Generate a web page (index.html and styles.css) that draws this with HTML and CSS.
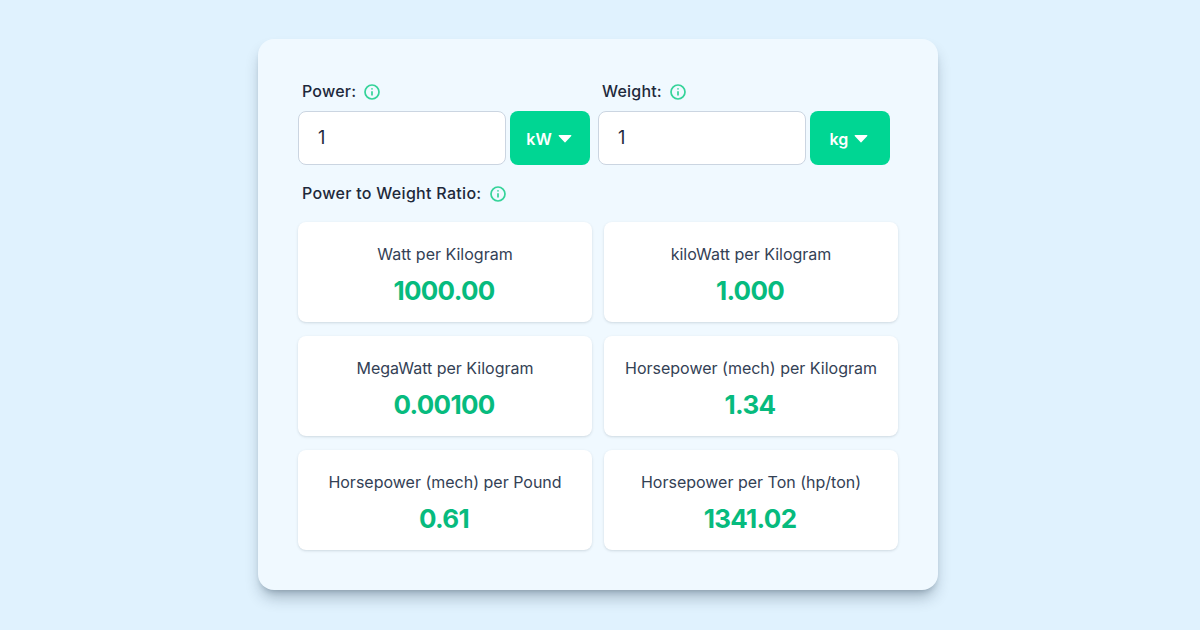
FILE: index.html
```html
<!DOCTYPE html>
<html lang="en">
<head>
<meta charset="utf-8">
<title>Power to Weight Ratio</title>
<link rel="stylesheet" href="styles.css">
</head>
<body>
<main class="panel">
  <div class="inputs">
    <div class="group">
      <div class="label"><span>Power:</span>
        <svg class="info" viewBox="0 0 16 16"><circle cx="8" cy="8" r="7"/><path d="M8 7.2v4.2M8 4.2v1.3"/></svg>
      </div>
      <div class="controls">
        <div class="field">1</div>
        <div class="unit"><span>kW</span><svg class="caret" viewBox="0 0 14 9"><path d="M1.2 1h11.6a.6.6 0 0 1 .45 1L7.4 8.2a.6.6 0 0 1-.8 0L.75 2a.6.6 0 0 1 .45-1z"/></svg></div>
      </div>
    </div>
    <div class="group">
      <div class="label"><span>Weight:</span>
        <svg class="info" viewBox="0 0 16 16"><circle cx="8" cy="8" r="7"/><path d="M8 7.2v4.2M8 4.2v1.3"/></svg>
      </div>
      <div class="controls">
        <div class="field">1</div>
        <div class="unit"><span>kg</span><svg class="caret" viewBox="0 0 14 9"><path d="M1.2 1h11.6a.6.6 0 0 1 .45 1L7.4 8.2a.6.6 0 0 1-.8 0L.75 2a.6.6 0 0 1 .45-1z"/></svg></div>
      </div>
    </div>
  </div>
  <div class="label ratio"><span>Power to Weight Ratio:</span>
    <svg class="info" viewBox="0 0 16 16"><circle cx="8" cy="8" r="7"/><path d="M8 7.2v4.2M8 4.2v1.3"/></svg>
  </div>
  <div class="results">
    <div class="card"><div class="name">Watt per Kilogram</div><div class="value">1000.00</div></div>
    <div class="card"><div class="name">kiloWatt per Kilogram</div><div class="value">1.000</div></div>
    <div class="card"><div class="name">MegaWatt per Kilogram</div><div class="value">0.00100</div></div>
    <div class="card"><div class="name">Horsepower (mech) per Kilogram</div><div class="value">1.34</div></div>
    <div class="card"><div class="name">Horsepower (mech) per Pound</div><div class="value">0.61</div></div>
    <div class="card"><div class="name">Horsepower per Ton (hp/ton)</div><div class="value">1341.02</div></div>
  </div>
</main>
</body>
</html>
```
FILE: styles.css
```css
* { box-sizing: border-box; }
html, body { margin: 0; height: 100%; }
body {
  background: #e0f2fe;
  font-family: "Inter", "Liberation Sans", sans-serif;
  color: #1e293b;
  display: flex;
  justify-content: center;
  align-items: flex-start;
  padding: 39px 4px 0 0;
}
.panel {
  width: 680px;
  height: 551px;
  background: #f0f9ff;
  border-radius: 16px;
  padding: 40px;
  box-shadow: 0 10px 15px -3px rgba(15, 40, 60, .3), 0 4px 6px -4px rgba(15, 40, 60, .3);
}
.inputs { display: flex; gap: 8px; }
.group { width: 292px; }
.label {
  display: flex;
  align-items: center;
  gap: 8px;
  height: 24px;
  padding-left: 4px;
  font-size: 16px;
  letter-spacing: .2px;
  font-weight: 500;
  line-height: 24px;
  color: #1e293b;
}
.info { width: 16px; height: 16px; fill: none; stroke: #34d399; stroke-width: 1.7; position: relative; top: 1px; }
.controls { display: flex; gap: 4px; margin-top: 8px; }
.field {
  width: 208px;
  height: 54px;
  background: #fff;
  border: 1px solid #cbd5e1;
  border-radius: 8px;
  padding-left: 19px;
  font-size: 18px;
  line-height: 52px;
  color: #1e293b;
}
.unit {
  width: 80px;
  height: 54px;
  background: #00d693;
  border-radius: 8px;
  color: #fff;
  font-size: 16px;
  font-weight: 600;
  display: flex;
  align-items: center;
  justify-content: center;
  gap: 6px;
  padding: 1px 2px 0 0;
}
.caret { width: 14px; height: 9px; fill: #fff; }
.ratio { margin-top: 16px; letter-spacing: .3px; }
.results {
  display: grid;
  grid-template-columns: 294px 294px;
  grid-auto-rows: 100px;
  column-gap: 12px;
  row-gap: 14px;
  margin-top: 17px;
}
.card {
  background: #fff;
  border-radius: 8px;
  box-shadow: 0 1px 3px rgba(15, 40, 60, .12), 0 1px 2px -1px rgba(15, 40, 60, .1);
  text-align: center;
  padding-top: 21px;
}
.name { font-size: 16px; line-height: 22px; color: #334155; }
.value { font-size: 26px; font-weight: 700; letter-spacing: -.7px; line-height: 32px; margin-top: 10px; padding-right: 2px; color: #07bb7e; }
```
